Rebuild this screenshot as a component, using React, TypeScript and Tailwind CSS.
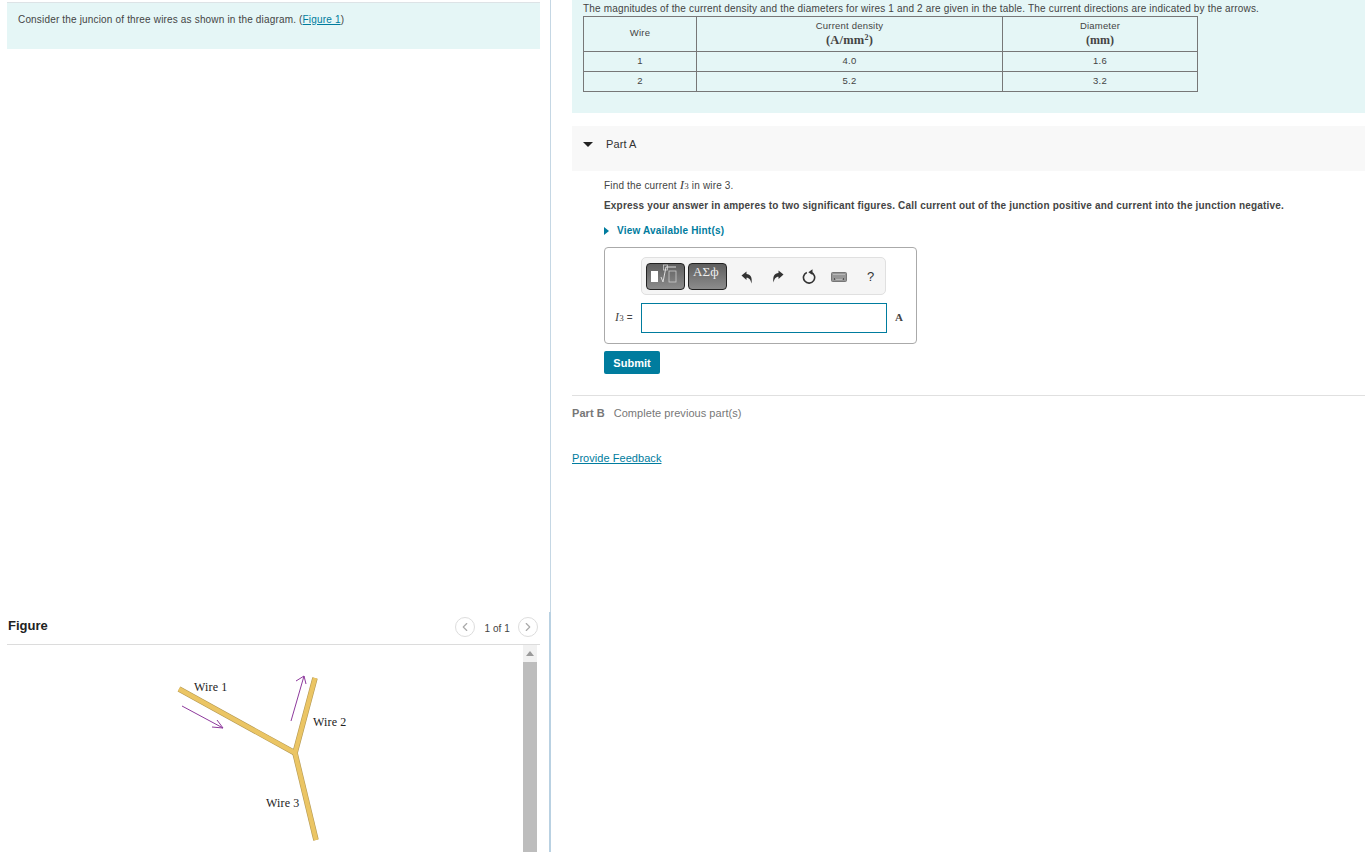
import { ChevronLeft, ChevronRight } from 'lucide-react'

const sans = "font-['Liberation_Sans',Arial,sans-serif]"
const serif = "font-['Liberation_Serif','Times_New_Roman',serif]"

function WireFigure() {
  return (
    <svg width="200" height="187" viewBox="0 0 200 187">
      <g fill="none" strokeLinecap="butt">
        <path d="M19 24 L135 88 L155 13" stroke="#b59a55" strokeWidth="5.6" strokeLinejoin="miter" />
        <path d="M135 88 L156 175" stroke="#b59a55" strokeWidth="5.6" />
        <path d="M19 24 L135 88 L155 13" stroke="#ebc564" strokeWidth="4.4" />
        <path d="M135 88 L156 175" stroke="#ebc564" strokeWidth="4.4" />
        <path d="M22 41 L63 63 M52 62 L63 63 L57 55" stroke="#8e3a9d" strokeWidth="1" />
        <path d="M131 56 L144 11 M136 16 L144 11 L146 19" stroke="#8e3a9d" strokeWidth="1" />
      </g>
      <g className={serif} fontSize="12" fill="#222">
        <text x="34" y="26">Wire 1</text>
        <text x="153" y="61">Wire 2</text>
        <text x="106" y="142">Wire 3</text>
      </g>
    </svg>
  )
}

function Toolbar() {
  return (
    <div className="flex h-[38px] w-[245px] items-center rounded-[5px] border border-[#e0e0e0] bg-[#f5f5f5] pl-[4px]">
      <div className="flex h-[27px] w-[39px] items-center rounded-[4px] border border-[#222] bg-gradient-to-b from-[#5f5f5f] to-[#8c8c8c] pl-[4px]">
        <svg width="30" height="24" viewBox="0 0 30 24" fill="none">
          <rect x="0" y="7" width="7" height="11" fill="#fff" />
          <rect x="12.5" y="1" width="4" height="5" stroke="#ccc" strokeWidth="0.8" />
          <path d="M10 13l2 5 3-15h10" stroke="#ddd" strokeWidth="1" />
          <rect x="18" y="7" width="7" height="11" stroke="#ccc" strokeWidth="0.8" />
        </svg>
      </div>
      <div className={`ml-[3px] flex h-[27px] w-[39px] justify-center rounded-[4px] border border-[#222] bg-gradient-to-b from-[#5f5f5f] to-[#8c8c8c] pr-[3px] text-[13px] leading-[15px] text-[#eee] ${serif}`}>
        ΑΣф
      </div>
      {/* undo */}
      <svg className="ml-[14px] mt-[2px]" width="12" height="13" viewBox="0 0 12 13">
        <path d="M0.5 4.5 L5.5 0.5 V3 C9.5 3 11.5 6.5 10.5 12.5 C9.5 9 8.5 6.8 5.5 6.8 V9 Z" fill="#333" />
      </svg>
      {/* redo */}
      <svg className="ml-[19px] mt-[1px]" width="12" height="13" viewBox="0 0 12 13">
        <path d="M11.5 4.5 L6.5 0.5 V3 C2.5 3 0.5 6.5 1.5 12.5 C2.5 9 3.5 6.8 6.5 6.8 V9 Z" fill="#333" />
      </svg>
      {/* reset */}
      <svg className="ml-[18px] mt-[1px]" width="14" height="15" viewBox="0 0 14 15" fill="none">
        <path d="M4.8 3.4 A5.6 5.6 0 1 0 8.8 3.2" stroke="#333" strokeWidth="1.6" />
        <path d="M10.5 0.3 V6 L6.3 3.2 Z" fill="#333" />
      </svg>
      {/* keyboard */}
      <svg className="ml-[15px] mt-[2px]" width="16" height="10" viewBox="0 0 16 10">
        <rect x="0.5" y="0.5" width="15" height="9" rx="1" fill="#979797" stroke="#777" />
        <rect x="2" y="2" width="12" height="1" fill="#b8b8b8" />
        <rect x="3" y="6" width="1" height="2" fill="#555" />
        <rect x="12" y="6" width="1" height="2" fill="#555" />
        <rect x="5" y="7" width="6" height="1" fill="#b8b8b8" />
      </svg>
      <span className="ml-[20px] mt-[1px] text-[13px] text-[#333]">?</span>
    </div>
  )
}

export default function App() {
  return (
    <div className={`flex h-[852px] w-[1365px] overflow-hidden bg-white text-[10px] tracking-[0.17px] text-[#444] ${sans}`}>
      {/* figure column */}
      <div className="relative flex h-full w-[551px] shrink-0 flex-col border-r border-[#c5d7e4] pl-[7px] pr-[10px] pt-[2px]">
        {/* splitter handle */}
        <div className="absolute bottom-0 right-[-1px] top-[612px] w-[2px] bg-[#b9d1e2]" />
        <div className="h-[47px] w-[533px] border-t border-[#dde3e6] bg-[#e5f6f6] pl-[11px] pt-[10px] leading-[13px]">
          Consider the juncion of three wires as shown in the diagram. (<span className="text-[#007c9e] underline">Figure 1</span>)
        </div>
        <div className="mt-[567px] flex h-[29px] w-[533px] items-center justify-between border-b border-[#dcdcdc] pb-[6px]">
          <span className="-mt-[2px] ml-px text-[13px] font-bold tracking-normal text-[#222]">Figure</span>
          <div className="flex items-center">
            <span className="flex h-5 w-5 items-center justify-center rounded-full border border-[#ddd] text-[#aaa]">
              <ChevronLeft size={14} />
            </span>
            <span className="ml-[9px] mr-[8px] mt-[2px] tracking-[0.1px] text-[#444]">1 of 1</span>
            <span className="mr-[2px] flex h-5 w-5 items-center justify-center rounded-full border border-[#ddd] text-[#aaa]">
              <ChevronRight size={14} />
            </span>
          </div>
        </div>
        <div className="flex w-[533px] flex-1 justify-between overflow-hidden">
          <div className="ml-[153px] mt-[20px]">
            <WireFigure />
          </div>
          <div className="mr-[3px] flex w-[14px] flex-col items-center bg-[#f1f1f1]">
            <span className="mt-[6px] h-0 w-0 border-x-[4px] border-b-[5px] border-x-transparent border-b-[#9a9a9a]" />
            <span className="mt-[6px] w-[14px] flex-1 bg-[#bdbdbd]" />
          </div>
        </div>
      </div>

      {/* question column */}
      <div className="flex-1 pl-[21px]">
        <div className="h-[113px] bg-[#e5f6f6] pl-[11px] pt-[2px]">
          <p className="leading-[13px]">
            The magnitudes of the current density and the diameters for wires 1 and 2 are given in the table. The current directions are indicated by the arrows.
          </p>
          <table className="mt-[1px] w-[615px] table-fixed border-collapse border border-[#777] text-center text-[9.5px] tracking-[0.2px]">
            <colgroup>
              <col className="w-[113px]" />
              <col className="w-[306px]" />
              <col className="w-[195px]" />
            </colgroup>
            <tbody>
              <tr className="h-[35px]">
                <td className="border border-[#777] pb-[2px]">Wire</td>
                <td className="border border-[#777] pb-[3px] leading-[14px]">
                  Current density
                  <div className={`text-[12.5px] font-bold tracking-[0.2px] ${serif}`}>
                    (A/mm<sup className="text-[8px]">2</sup>)
                  </div>
                </td>
                <td className="border border-[#777] pb-[3px] leading-[14px]">
                  Diameter
                  <div className={`text-[12px] font-bold tracking-normal ${serif}`}>(mm)</div>
                </td>
              </tr>
              <tr className="h-[20px]">
                <td className="border border-[#777]">1</td>
                <td className="border border-[#777]">4.0</td>
                <td className="border border-[#777]">1.6</td>
              </tr>
              <tr className="h-[20px]">
                <td className="border border-[#777]">2</td>
                <td className="border border-[#777]">5.2</td>
                <td className="border border-[#777]">3.2</td>
              </tr>
            </tbody>
          </table>
        </div>

        <div className="mt-[13px] flex h-[45px] items-center bg-[#f8f8f8] pb-[9px] pl-[11px]">
          <span className="h-0 w-0 border-x-[5px] border-t-[5px] border-x-transparent border-t-[#222]" />
          <span className="ml-[13px] text-[11px] tracking-[0.1px] text-[#333]">Part A</span>
        </div>

        <div className="pl-[32px]">
          <p className="mt-[7px] leading-[14px]">
            Find the current <i className={`text-[13px] ${serif}`}>I</i><span className={`text-[9px] ${serif}`}>3</span> in wire 3.
          </p>
          <p className="mt-[6px] font-bold leading-[14px] tracking-[0.19px]">
            Express your answer in amperes to two significant figures. Call current out of the junction positive and current into the junction negative.
          </p>
          <div className="mt-[11px] flex items-center text-[10px] font-bold leading-[14px] tracking-[0.19px] text-[#007c9e]">
            <span className="mr-[8px] h-0 w-0 border-y-[4px] border-l-[5px] border-y-transparent border-l-[#007c9e]" />
            View Available Hint(s)
          </div>

          <div className="mt-[9px] h-[97px] w-[313px] rounded-[4px] border border-[#aaa] pl-[36px] pt-[9px]">
            <Toolbar />
            <div className="mt-[8px] flex items-center">
              <span className="-ml-[26px] -mt-[2px] w-[26px] whitespace-nowrap text-[10px]">
                <i className={`text-[12px] ${serif}`}>I</i><span className={`text-[9px] ${serif}`}>3</span> =
              </span>
              <div className="h-[30px] w-[246px] border border-[#007c9e] bg-white" />
              <span className={`ml-[8px] -mt-[2px] text-[11px] font-bold ${serif}`}>A</span>
            </div>
          </div>

          <button className="mt-[7px] block h-[23px] w-[56px] rounded-[2px] bg-[#007c9e] pt-[2px] text-center text-[11px] font-bold tracking-normal text-white">
            Submit
          </button>
        </div>

        <div className="mt-[21px] flex items-center border-t border-[#e0e0e0] pt-[9px] text-[11px] tracking-[0.05px] text-[#777]">
          <span className="font-bold">Part B</span>
          <span className="ml-[9px]">Complete previous part(s)</span>
        </div>
        <a className="mt-[28px] block text-[11px] tracking-[0.05px] text-[#007c9e] underline">Provide Feedback</a>
      </div>
    </div>
  )
}
